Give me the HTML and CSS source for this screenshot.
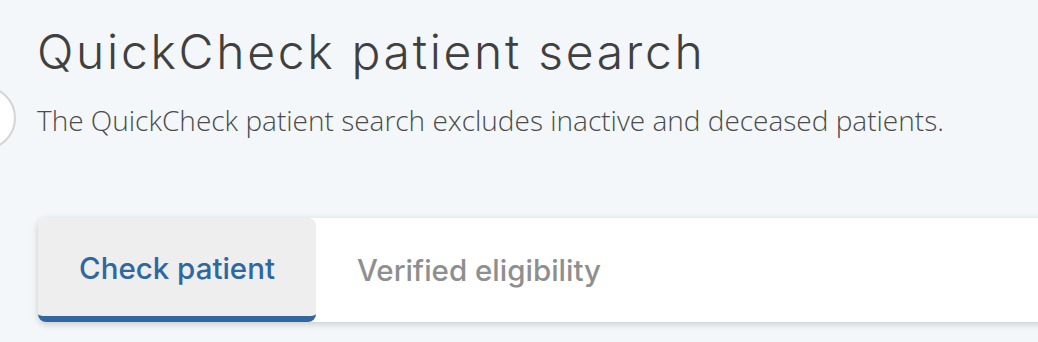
FILE: index.html
```html
<!DOCTYPE html>
<html lang="en">
<head>
<meta charset="utf-8">
<title>QuickCheck patient search</title>
<link rel="stylesheet" href="styles.css">
</head>
<body>
<div class="page">
  <span class="side-knob" aria-hidden="true"></span>
  <header class="head">
    <h1 class="title">QuickCheck patient search</h1>
    <p class="subtitle">The QuickCheck patient search excludes inactive and deceased patients.</p>
  </header>
  <nav class="tabs">
    <button class="tab tab-active">Check patient</button>
    <button class="tab">Verified eligibility</button>
  </nav>
</div>
</body>
</html>
```
FILE: styles.css
```css
html, body {
  margin: 0;
  padding: 0;
  background: #f3f7f9;
  height: 100%;
  overflow: hidden;
}
.page {
  position: relative;
  padding: 24px 0 0 37px;
  width: 1100px;
}
.side-knob {
  position: absolute;
  left: -48px;
  top: 86px;
  width: 60px;
  height: 60px;
  border-radius: 50%;
  background: #ffffff;
  border: 2px solid #d2d4d6;
}
.head {
  display: flex;
  flex-direction: column;
}
.title {
  margin: 0;
  font-family: "Inter", "Lato", sans-serif;
  font-weight: 300;
  font-size: 48px;
  line-height: 56px;
  color: #404040;
  letter-spacing: 2.7px;
}
.subtitle {
  margin: 22px 0 0 0;
  font-family: "Open Sans", sans-serif;
  font-weight: 300;
  font-size: 28px;
  line-height: 36px;
  color: #4b4b4b;
}
.tabs {
  display: flex;
  margin: 80px 0 0 1px;
  background: #ffffff;
  height: 104px;
  border-radius: 8px 0 0 8px;
  box-shadow: 0 2px 7px rgba(0, 0, 0, 0.18);
}
.tab {
  border: 0;
  background: transparent;
  font-family: "Inter", "Lato", sans-serif;
  font-weight: 500;
  font-size: 29.5px;
  color: #8f8f8f;
  padding: 0 41px;
  height: 100%;
  cursor: pointer;
}
.tab-active {
  background: #eeeeee;
  color: #2f67a0;
  width: 278px;
  border-radius: 8px;
  border-bottom: 6px solid #30679e;
  padding-top: 2px;
}
```
